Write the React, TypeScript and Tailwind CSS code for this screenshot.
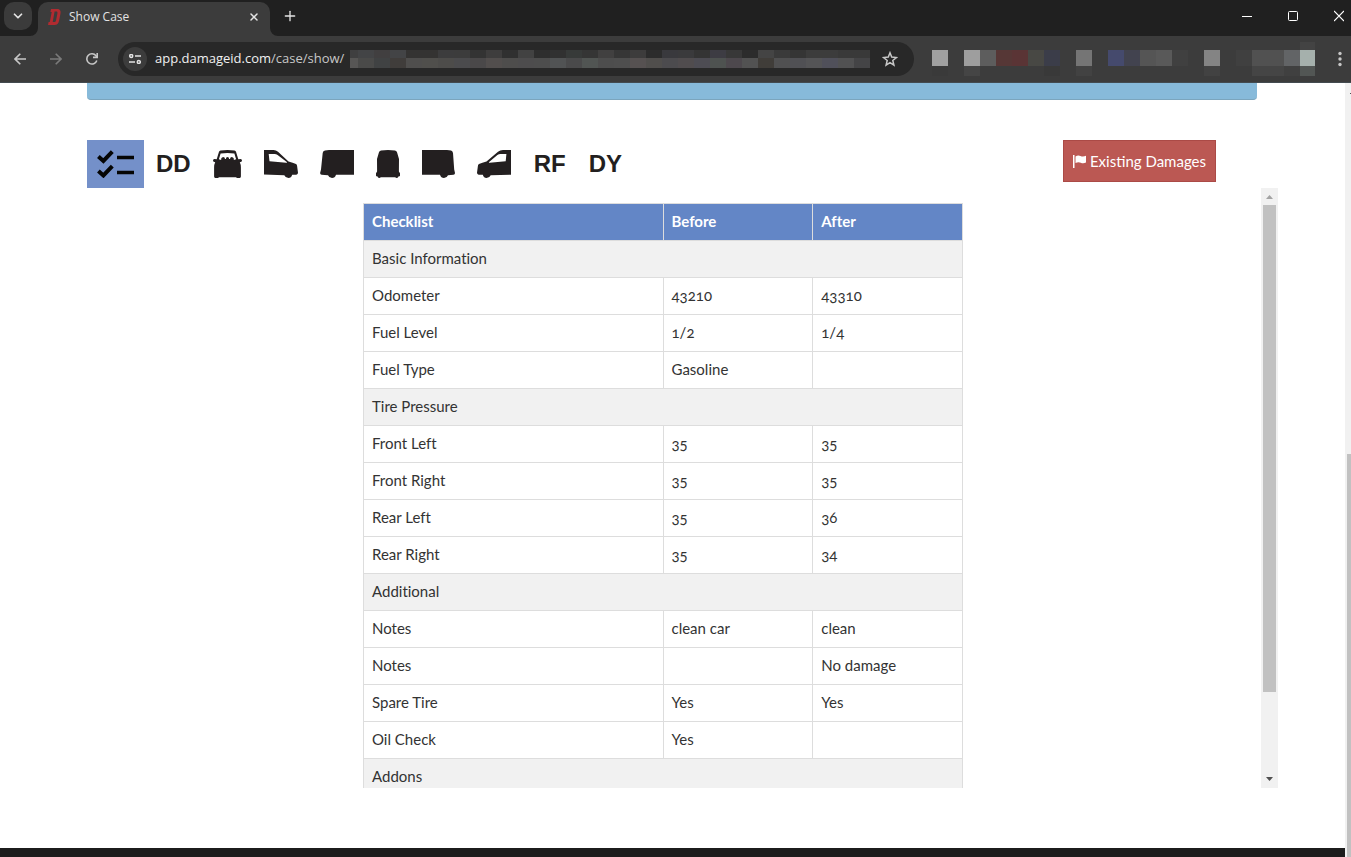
import type { ReactNode } from 'react'
import { ChevronDown, X, Plus } from 'lucide-react'

type Cell = { x: number; y: number; w: number; h: number; fill: string }

type ChecklistRow =
  | { section: string }
  | { label: string; before: string; after: string }

const checklist: ChecklistRow[] = [
  { section: 'Basic Information' },
  { label: 'Odometer', before: '43210', after: '43310' },
  { label: 'Fuel Level', before: '1/2', after: '1/4' },
  { label: 'Fuel Type', before: 'Gasoline', after: '' },
  { section: 'Tire Pressure' },
  { label: 'Front Left', before: '35', after: '35' },
  { label: 'Front Right', before: '35', after: '35' },
  { label: 'Rear Left', before: '35', after: '36' },
  { label: 'Rear Right', before: '35', after: '34' },
  { section: 'Additional' },
  { label: 'Notes', before: 'clean car', after: 'clean' },
  { label: 'Notes', before: '', after: 'No damage' },
  { label: 'Spare Tire', before: 'Yes', after: 'Yes' },
  { label: 'Oil Check', before: 'Yes', after: '' },
  { section: 'Addons' },
]

// redacted part of the address, one colour per 16px block
const urlTop = [
  '#434446', '#413f40', '#434446', '#343332', '#343332', '#3c3c3d', '#3c3c3c', '#333333', '#3e3d3d', '#303030', '#424242',
  '#2e2e2e', '#313131', '#373a39', '#353535', '#414040', '#363636', '#3d3c3c', '#2c2c2c', '#39393d', '#3a3a3c', '#343434',
  '#3d3c43', '#383838', '#2c2c2c', '#444444', '#3a3a3a', '#353535', '#3c3c3c', '#3c3c3c', '#393939', '#393939',
]
const urlBottom = [
  '#4a4a49', '#404243', '#403d3b', '#4f4e4d', '#504f4c', '#4d4c4a', '#4b4b4d', '#4a4849', '#524e4d', '#4e4d4c', '#4d4c4d',
  '#4d4d4d', '#515354', '#4a4a4b', '#515553', '#4d4d4d', '#4e4e4e', '#565151', '#504e4c', '#4c4b4e', '#504c4e', '#4d4c53',
  '#4e5250', '#4d484d', '#525252', '#403d39', '#505051', '#505054', '#545456', '#50505a', '#515152', '#444446',
]

const extensionCells: Cell[] = [
  { x: 0, y: 8, w: 16, h: 16, fill: '#a0a0a0' },
  { x: 0, y: 24, w: 16, h: 10, fill: '#3a3a3a' },
  { x: 32, y: 8, w: 16, h: 16, fill: '#9e9e9e' },
  { x: 32, y: 24, w: 16, h: 10, fill: '#454545' },
  { x: 48, y: 8, w: 16, h: 16, fill: '#5d5d5d' },
  { x: 64, y: 8, w: 16, h: 16, fill: '#563736' },
  { x: 80, y: 8, w: 16, h: 16, fill: '#5a3435' },
  { x: 96, y: 8, w: 16, h: 16, fill: '#484844' },
  { x: 112, y: 8, w: 16, h: 16, fill: '#3b3d49' },
  { x: 112, y: 24, w: 16, h: 10, fill: '#393939' },
  { x: 144, y: 8, w: 16, h: 16, fill: '#757575' },
  { x: 144, y: 24, w: 16, h: 10, fill: '#424242' },
  { x: 176, y: 8, w: 16, h: 16, fill: '#454a6d' },
  { x: 192, y: 8, w: 16, h: 16, fill: '#42434f' },
  { x: 208, y: 8, w: 16, h: 16, fill: '#555555' },
  { x: 224, y: 8, w: 16, h: 16, fill: '#595959' },
  { x: 240, y: 8, w: 16, h: 16, fill: '#404040' },
  { x: 272, y: 8, w: 16, h: 16, fill: '#848484' },
  { x: 272, y: 24, w: 16, h: 10, fill: '#424242' },
  { x: 304, y: 8, w: 16, h: 16, fill: '#404040' },
  { x: 320, y: 8, w: 32, h: 16, fill: '#515151' },
  { x: 320, y: 24, w: 32, h: 10, fill: '#454545' },
  { x: 352, y: 8, w: 16, h: 16, fill: '#626466' },
  { x: 352, y: 24, w: 16, h: 10, fill: '#404040' },
  { x: 368, y: 0, w: 15, h: 8, fill: '#434343' },
  { x: 368, y: 8, w: 15, h: 16, fill: '#a5b0ac' },
  { x: 368, y: 24, w: 15, h: 10, fill: '#525654' },
]

function UrlMosaic() {
  return (
    <svg width="527" height="18" viewBox="0 0 527 18" shapeRendering="crispEdges" className="shrink-0" aria-hidden="true">
      <rect width="8" height="8" fill="#3f3f40" />
      <rect y="8" width="8" height="10" fill="#575655" />
      {urlTop.map((fill, i) => (
        <rect key={i} x={8 + i * 16} width="16" height="8" fill={fill} />
      ))}
      {urlBottom.map((fill, i) => (
        <rect key={i} x={8 + i * 16} y="8" width="16" height="10" fill={fill} />
      ))}
    </svg>
  )
}

function TabStrip() {
  return (
    <div className="flex h-9 items-start bg-[#202020] text-[#e3e3e3]">
      <button aria-label="Search tabs" className="mt-[2px] ml-1 flex size-7 items-center justify-center rounded-[10px] bg-[#3b3b3b]">
        <ChevronDown size={14} strokeWidth={3} />
      </button>
      <svg width="8" height="36" viewBox="0 0 8 36" className="ml-[-2px] shrink-0" aria-hidden="true">
        <path d="M8 28v8H0a8 8 0 0 0 8-8z" fill="#3c3c3c" />
      </svg>
      <div className="mt-[2px] flex h-[34px] w-[232px] items-center rounded-t-[10px] bg-[#3c3c3c] pb-1 pl-[10px]">
        <svg width="13" height="16" viewBox="0 0 13 16" aria-hidden="true">
          <path
            fillRule="evenodd"
            d="M3 0h6c3 0 4 2 3.500 4.500L11 12c-.6 2.600-2 4-4.500 4H0l.6-3h1.200L3.700 3H2.400zM6.600 2.600 4.700 13h1.500c1 0 1.500-.5 1.800-1.600l1.400-7c.2-1.200-.1-1.800-1.200-1.800z"
            fill="#b02b30"
          />
        </svg>
        <span className="ml-2 text-xs">Show Case</span>
        <button aria-label="Close tab" className="mr-[10px] ml-auto">
          <X size={12} strokeWidth={3} />
        </button>
      </div>
      <svg width="8" height="36" viewBox="0 0 8 36" className="shrink-0" aria-hidden="true">
        <path d="M0 28v8h8a8 8 0 0 1-8-8z" fill="#3c3c3c" />
      </svg>
      <button aria-label="New tab" className="mt-2 ml-1">
        <Plus size={16} strokeWidth={2} />
      </button>
      <div className="mt-[10px] mr-[7px] ml-auto flex gap-9 text-white">
        <button aria-label="Minimize">
          <svg width="10" height="12" viewBox="0 0 10 12" shapeRendering="crispEdges">
            <path d="M0 6h10v1H0z" fill="currentColor" />
          </svg>
        </button>
        <button aria-label="Maximize">
          <svg width="10" height="12" viewBox="0 0 10 12" fill="none" stroke="currentColor">
            <rect x=".5" y="1.500" width="9" height="9" rx="1" />
          </svg>
        </button>
        <button aria-label="Close">
          <svg width="10" height="12" viewBox="0 0 10 12" fill="none" stroke="currentColor" strokeWidth="1.200">
            <path d="m0 1 10 10M10 1 0 11" />
          </svg>
        </button>
      </div>
    </div>
  )
}

function Toolbar() {
  return (
    <div className="flex h-[47px] items-center border-b border-[#434b50] bg-[#3c3c3c] pl-[14px] text-[#c7c7c7]">
      <button aria-label="Back">
        <svg width="12" height="12" viewBox="0 0 12 12" fill="none" stroke="currentColor" strokeWidth="1.600">
          <path d="M12 6H1M6.300.7 1 6l5.300 5.300" />
        </svg>
      </button>
      <button aria-label="Forward" className="ml-6 text-[#7a7a7a]">
        <svg width="12" height="12" viewBox="0 0 12 12" fill="none" stroke="currentColor" strokeWidth="1.600">
          <path d="M0 6h11M5.700.7 11 6l-5.300 5.300" />
        </svg>
      </button>
      <button aria-label="Reload" className="ml-6">
        <svg width="12" height="12" viewBox="0 0 12 12" fill="none" stroke="currentColor" strokeWidth="1.600">
          <path d="M10.800 7.500A5.100 5.100 0 1 1 10 2.800L11.200 4.200" />
          <path d="M11.200 0v4.400H7" />
        </svg>
      </button>
      <div className="ml-5 flex h-[34px] w-[796px] shrink-0 items-center rounded-full bg-[#282828] pl-[5px]">
        <button aria-label="Site information" className="flex size-6 shrink-0 items-center justify-center rounded-full bg-[#3c3c3c] text-[#e3e3e3]">
          <svg width="12" height="10" viewBox="0 0 12 10" fill="none" stroke="currentColor" strokeWidth="1.500">
            <circle cx="2.200" cy="2" r="1.500" />
            <path d="M6 2h6M0 8h6" />
            <circle cx="9.800" cy="8" r="1.500" />
          </svg>
        </button>
        <span className="ml-2 w-[195px] text-[13px] whitespace-nowrap text-[#c7c7c7]">
          <span className="text-[#f0f0f0]">app.damageid.com</span>/case/show/
        </span>
        <UrlMosaic />
        <button aria-label="Bookmark this tab" className="ml-[5px] shrink-0">
          <svg width="16" height="16" viewBox="0 0 16 16" fill="none" stroke="currentColor" strokeWidth="1.500">
            <path d="m8 1.800 1.700 4.300 4.700.4-3.600 3 1.100 4.600L8 11.600l-3.900 2.500 1.100-4.600-3.600-3 4.700-.4z" />
          </svg>
        </button>
      </div>
      <svg width="383" height="34" viewBox="0 0 383 34" shapeRendering="crispEdges" className="ml-[18px] shrink-0" aria-hidden="true">
        {extensionCells.map((c, i) => (
          <rect key={i} x={c.x} y={c.y} width={c.w} height={c.h} fill={c.fill} />
        ))}
      </svg>
      <button aria-label="Browser menu" className="mr-[9px] ml-auto">
        <svg width="4" height="16" viewBox="0 0 4 16" fill="currentColor">
          <circle cx="2" cy="2.500" r="1.700" />
          <circle cx="2" cy="8" r="1.700" />
          <circle cx="2" cy="13.500" r="1.700" />
        </svg>
      </button>
    </div>
  )
}

function ViewLink({ label, active, children }: { label: string; active?: boolean; children: ReactNode }) {
  return (
    <a
      href="#"
      aria-label={label}
      className={`flex h-12 items-center text-2xl font-bold text-[#231f20] ${active ? 'bg-[#7490c9] px-[10px]' : 'px-[11px]'}`}
    >
      {children}
    </a>
  )
}

function ViewNav() {
  return (
    <nav className="flex font-['Liberation_Sans',sans-serif]">
      <ViewLink label="Checklist" active>
        <svg width="37" height="28" viewBox="0 0 37 28" fill="none" stroke="#050505" strokeWidth="4">
          <path d="m1.400 6.500 5 4.500L15.300 1.600M1.400 21l5 4.500 8.900-9.400" />
          <path d="M20 7.500h17M20 22.500h17" strokeWidth="3.600" />
        </svg>
      </ViewLink>
      <ViewLink label="DD">
        <span className="pl-px">DD</span>
      </ViewLink>
      <ViewLink label="Front">
        <svg width="29" height="28" viewBox="0 0 29 28" fill="#231f20">
          <path
            fillRule="evenodd"
            d="M7.500.5Q14.500-.5 21.500.5q1.200.2 1.500 1.300l2.300 7.400 2.300-.2q1.400.2 1.400 1.500 0 1.300-1.300 1.600l-.9.200q1.100 2.200 1.100 5v9.300q0 1.400-1.200 1.400h-2.400q-1 0-1.200-.8H5.900q-.2.800-1.200.8H2.300q-1.200 0-1.200-1.400v-9.300q0-2.800 1.100-5l-.9-.2Q0 11.800 0 10.500 0 9.200 1.400 9l2.300.2L6 1.800Q6.300.7 7.500.5zM7.600 3.600 5.900 9.200l2.200.7.300-2 1.700-1 1.400.6.500 1.600h.9l.4-1.600 1.200-.6 1.200.6.4 1.600h.9l.5-1.600 1.400-.6 1.700 1 .3 2 2.200-.7-1.700-5.600Q14.500 2.600 7.600 3.600z"
          />
        </svg>
      </ViewLink>
      <ViewLink label="Front right side">
        <svg width="34" height="28" viewBox="0 0 34 28" fill="#231f20">
          <path
            fillRule="evenodd"
            d="M0 0h9.500q2.500 0 4.500 1.700L24.500 11.500q4.500 1 7.500 2.600 1 .6 1.100 1.900l.9 6.800q0 1.700-1.700 2h-4.100q-1 3.200-3.700 3.200-3 0-4.200-2.800L0 24.600zM4.700 4l.8 7.300 16.700 1.500q1.300.1.600-.9L13.600 5Q12.200 4 10.600 4z"
          />
        </svg>
      </ViewLink>
      <ViewLink label="Rear right side">
        <svg width="34" height="28" viewBox="0 0 34 28" fill="#231f20">
          <path d="M5 .4Q7 0 9 0h25v24.800H16q-1 3.200-4 3.200-2.800 0-4-2.800l-6.400-.4q-1.500-.2-1.500-1.700l.9-3.600L2.700 3Q3 .8 5 .4z" />
        </svg>
      </ViewLink>
      <ViewLink label="Rear">
        <svg width="24" height="28" viewBox="0 0 24 28" fill="#231f20">
          <path d="M5 .6Q12-.6 19 .6q1.800.3 2.100 2L23 9l-.1 12.500 1.100 1.700v2.600q0 .8-1.600.8-.2 1.400-1.500 1.400-1.400 0-1.600-.8H4.700Q4.500 28 3.100 28q-1.300 0-1.500-1.400Q0 26.600 0 25.800v-2.600l1.100-1.700L1 9l1.900-6.400Q3.200.9 5 .6z" />
        </svg>
      </ViewLink>
      <ViewLink label="Rear left side">
        <svg width="33" height="28" viewBox="0 0 33 28" fill="#231f20">
          <path d="M0 0h25q2 0 4 .4Q30.500.8 31 3l1.200 16.500.8 3.600q0 1.500-1.500 1.700l-5.500.4q-1.200 2.800-4 2.800-3 0-4-3.200H0z" />
        </svg>
      </ViewLink>
      <ViewLink label="Front left side">
        <svg width="34" height="28" viewBox="0 0 34 28" fill="#231f20">
          <path
            fillRule="evenodd"
            d="M34 0h-8q-3 0-5 1.700L9.500 11.500Q5 12.500 2 14.100q-1 .6-1.100 1.900L0 22.800q0 1.700 1.700 2h4.100q1 3.200 3.700 3.200 3 0 4.200-2.800l20.300-.4zM29.400 4l-.7 7.300-16 1.500q-1.300.1-.6-.9L20.400 5Q21.800 4 23.400 4z"
          />
        </svg>
      </ViewLink>
      <ViewLink label="RF">
        <span className="pl-px">RF</span>
      </ViewLink>
      <ViewLink label="DY">
        <span className="pl-px">DY</span>
      </ViewLink>
    </nav>
  )
}

function ChecklistTable() {
  const cell = 'border border-[#dddddd] px-2 pt-[7px] pb-[9px]'

  return (
    <table className="w-[600px] table-fixed border-collapse text-left text-[15px] leading-5 text-[#333333] oldstyle-nums [font-variant-ligatures:none]">
      <thead>
        <tr className="bg-[#6386c6] text-white">
          <th className={`${cell} w-1/2`}>Checklist</th>
          <th className={`${cell} w-1/4`}>Before</th>
          <th className={`${cell} w-1/4`}>After</th>
        </tr>
      </thead>
      <tbody>
        {checklist.map((row, i) =>
          'section' in row ? (
            <tr key={i} className="bg-[#f1f1f1]">
              <td colSpan={3} className={cell}>{row.section}</td>
            </tr>
          ) : (
            <tr key={i}>
              <td className={cell}>{row.label}</td>
              <td className={cell}>{row.before}</td>
              <td className={cell}>{row.after}</td>
            </tr>
          )
        )}
      </tbody>
    </table>
  )
}

function PanelScrollbar() {
  return (
    <div className="flex w-[17px] shrink-0 flex-col items-center bg-[#f1f1f1]" aria-hidden="true">
      <svg width="17" height="17" viewBox="0 0 17 17" className="shrink-0">
        <path d="M5 11h7L8.500 7z" fill="#a3a3a3" />
      </svg>
      <div className="h-[487px] w-[13px] bg-[#c1c1c1]" />
      <svg width="17" height="17" viewBox="0 0 17 17" className="mt-auto shrink-0">
        <path d="M5 6h7l-3.500 4z" fill="#505050" />
      </svg>
    </div>
  )
}

export default function App() {
  return (
    <div className="flex h-screen flex-col overflow-hidden bg-white font-['Open_Sans',sans-serif]">
      <TabStrip />
      <Toolbar />
      <div className="flex min-h-0 flex-1 font-['Lato',sans-serif]">
        <main className="flex min-w-0 flex-1 flex-col">
          <div className="flex justify-center pr-px">
            <div className="w-full max-w-[1170px]">
              <div className="h-[17px] rounded-b border-b border-[#7ba5bd] bg-[#87bada]" />
              <div className="mt-10 flex items-start justify-between">
                <ViewNav />
                <button className="mr-[41px] flex h-[42px] items-center gap-1 border border-[#ab4a46] bg-[#bb5853] px-[9px] text-[15px] text-white">
                  <svg width="13" height="13" viewBox="0 0 13 13" fill="currentColor" aria-hidden="true">
                    <path d="M0 0h1.500v13H0zM2.500 1.500Q5-.3 7.500 1T13 .8v6.700q-2.700 1.300-5.200.2T2.500 8z" />
                  </svg>
                  Existing Damages
                </button>
              </div>
              <div className="-mr-[21px] -ml-[22px] flex h-[600px]">
                <div className="flex flex-1 justify-center overflow-hidden pt-[15px]">
                  <ChecklistTable />
                </div>
                <PanelScrollbar />
              </div>
            </div>
          </div>
          <footer className="mt-auto h-[9px] bg-[#1c1c1c]" />
        </main>
        <div className="flex w-[6px] flex-col items-end bg-[#f1f1f1]" aria-hidden="true">
          <div className="mt-[10px] h-px w-px bg-[#505050]" />
          <div className="mt-[360px] w-1 flex-1 bg-[#c1c1c1]" />
        </div>
      </div>
    </div>
  )
}
